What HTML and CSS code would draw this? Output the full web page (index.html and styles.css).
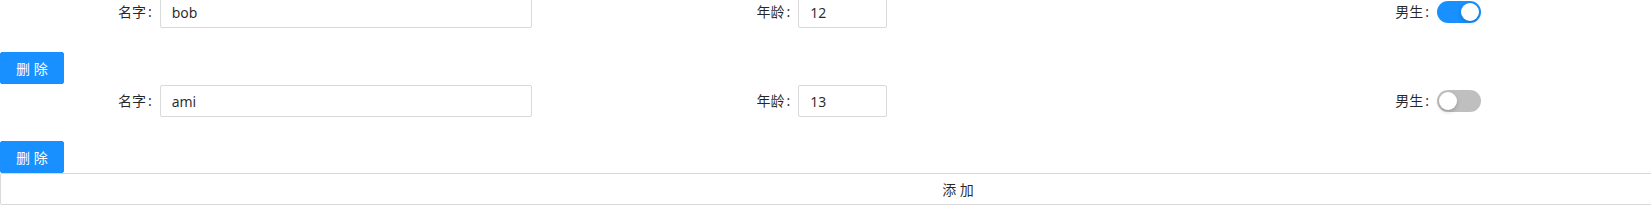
FILE: index.html
```html
<!DOCTYPE html>
<html lang="zh-CN">
<head>
  <meta charset="UTF-8">
  <meta name="viewport" content="width=device-width, initial-scale=1.0">
  <title>动态表单</title>
  <link rel="stylesheet" href="styles.css">
</head>
<body>
  <div class="form">
    <div class="item">
      <div class="fields">
        <div class="field">
          <label class="field-label">名字</label>
          <div class="field-control">
            <input class="input" type="text" value="bob">
          </div>
        </div>
        <div class="field">
          <label class="field-label">年龄</label>
          <div class="field-control">
            <input class="input input-age" type="text" value="12">
          </div>
        </div>
        <div class="field">
          <label class="field-label">男生</label>
          <div class="field-control">
            <span class="switch checked"><span class="switch-handle"></span></span>
          </div>
        </div>
      </div>
      <button class="btn-delete">删 除</button>
    </div>

    <div class="item">
      <div class="fields">
        <div class="field">
          <label class="field-label">名字</label>
          <div class="field-control">
            <input class="input" type="text" value="ami">
          </div>
        </div>
        <div class="field">
          <label class="field-label">年龄</label>
          <div class="field-control">
            <input class="input input-age" type="text" value="13">
          </div>
        </div>
        <div class="field">
          <label class="field-label">男生</label>
          <div class="field-control">
            <span class="switch"><span class="switch-handle"></span></span>
          </div>
        </div>
      </div>
      <button class="btn-delete">删 除</button>
    </div>

    <button class="btn-add">添 加</button>
  </div>
</body>
</html>
```

FILE: styles.css
```css
* {
  box-sizing: border-box;
  margin: 0;
  padding: 0;
}

html,
body {
  background-color: #fff;
  overflow: hidden;
}

body {
  font-family: "Noto Sans", "Noto Sans CJK SC", sans-serif;
  font-size: 14px;
  line-height: 1.5715;
  color: rgba(0, 0, 0, 0.85);
}

.form {
  width: 1916px;
  margin-top: -4px;
}

.item + .item {
  margin-top: 1px;
}

.fields {
  display: grid;
  grid-template-columns: repeat(3, 1fr);
  margin-bottom: 24px;
}

.field {
  display: flex;
  align-items: center;
  height: 32px;
}

.field-label {
  width: 25%;
  text-align: right;
  white-space: nowrap;
  line-height: 32px;
  color: rgba(0, 0, 0, 0.85);
}

.field-label::after {
  content: ":";
  margin: 0 8px 0 2px;
}

.field-control {
  width: 58.333%;
  display: flex;
  align-items: center;
}

.input {
  width: 100%;
  height: 32px;
  padding: 4px 11px;
  border: 1px solid #d9d9d9;
  border-radius: 2px;
  font-family: inherit;
  font-size: 14px;
  color: rgba(0, 0, 0, 0.85);
  background-color: #fff;
  outline: none;
}

.input-age {
  width: 89px;
}

.switch {
  position: relative;
  display: inline-block;
  width: 44px;
  height: 22px;
  border-radius: 100px;
  background-color: rgba(0, 0, 0, 0.25);
}

.switch.checked {
  background-color: #1890ff;
}

.switch-handle {
  position: absolute;
  top: 2px;
  left: 2px;
  width: 18px;
  height: 18px;
  border-radius: 50%;
  background-color: #fff;
  box-shadow: 0 2px 4px rgba(0, 35, 11, 0.2);
}

.switch.checked .switch-handle {
  left: 24px;
}

.btn-delete {
  display: block;
  height: 32px;
  padding: 4px 15px;
  border: 1px solid #1890ff;
  border-radius: 2px;
  background-color: #1890ff;
  color: #fff;
  font-family: inherit;
  font-size: 14px;
  cursor: pointer;
}

.btn-add {
  display: block;
  width: 100%;
  height: 32px;
  padding: 4px 15px;
  border: 1px solid #d9d9d9;
  border-radius: 2px;
  background-color: #fff;
  color: rgba(0, 0, 0, 0.85);
  font-family: inherit;
  font-size: 14px;
  cursor: pointer;
}
```
